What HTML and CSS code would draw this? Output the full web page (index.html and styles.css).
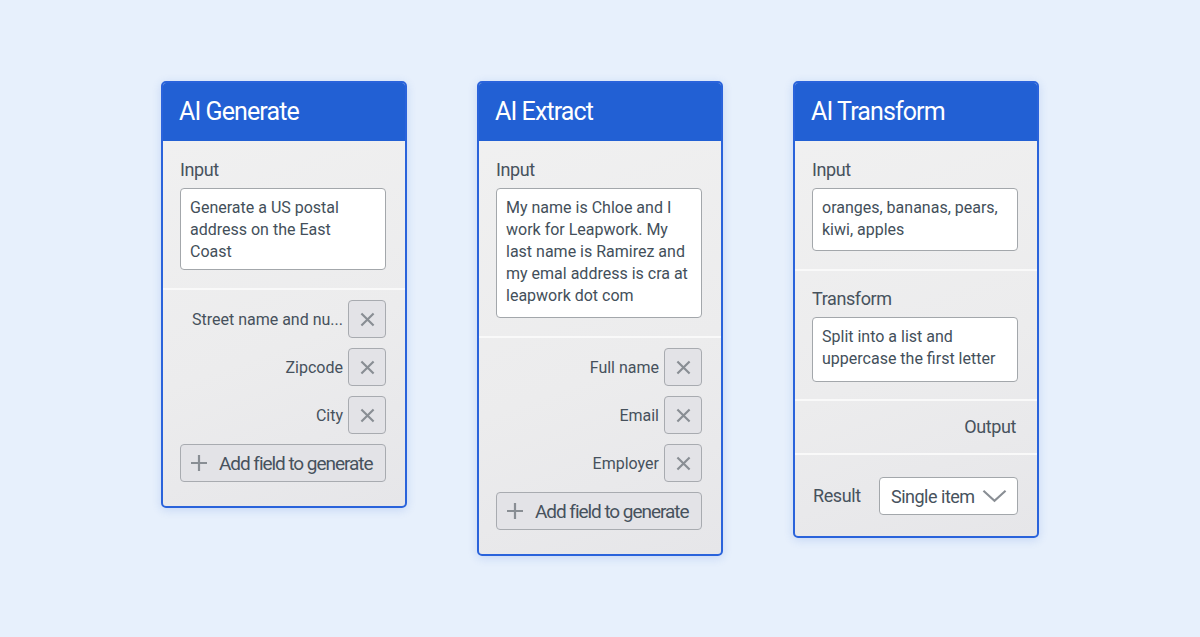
FILE: index.html
```html
<!DOCTYPE html>
<html lang="en">
<head>
<meta charset="utf-8">
<title>AI blocks</title>
<link rel="stylesheet" href="styles.css">
</head>
<body>
<main class="stage">

  <section class="card">
    <header class="card-head">AI Generate</header>
    <div class="sec">
      <div class="label">Input</div>
      <div class="box">Generate a US postal address on the East Coast</div>
    </div>
    <div class="sec sec-fields">
      <div class="field"><span class="field-name">Street name and nu...</span><button class="rm"><svg viewBox="0 0 16 16"><path d="M1.5 1.5L14.5 14.5M14.5 1.5L1.5 14.5"/></svg></button></div>
      <div class="field"><span class="field-name">Zipcode</span><button class="rm"><svg viewBox="0 0 16 16"><path d="M1.5 1.5L14.5 14.5M14.5 1.5L1.5 14.5"/></svg></button></div>
      <div class="field"><span class="field-name">City</span><button class="rm"><svg viewBox="0 0 16 16"><path d="M1.5 1.5L14.5 14.5M14.5 1.5L1.5 14.5"/></svg></button></div>
      <button class="add"><svg viewBox="0 0 18 18"><path d="M9 1V17M1 9H17"/></svg><span>Add field to generate</span></button>
    </div>
  </section>

  <section class="card">
    <header class="card-head">AI Extract</header>
    <div class="sec">
      <div class="label">Input</div>
      <div class="box box-tall">My name is Chloe and I work for Leapwork. My last name is Ramirez and my emal address is cra at leapwork dot com</div>
    </div>
    <div class="sec sec-fields">
      <div class="field"><span class="field-name">Full name</span><button class="rm"><svg viewBox="0 0 16 16"><path d="M1.5 1.5L14.5 14.5M14.5 1.5L1.5 14.5"/></svg></button></div>
      <div class="field"><span class="field-name">Email</span><button class="rm"><svg viewBox="0 0 16 16"><path d="M1.5 1.5L14.5 14.5M14.5 1.5L1.5 14.5"/></svg></button></div>
      <div class="field"><span class="field-name">Employer</span><button class="rm"><svg viewBox="0 0 16 16"><path d="M1.5 1.5L14.5 14.5M14.5 1.5L1.5 14.5"/></svg></button></div>
      <button class="add"><svg viewBox="0 0 18 18"><path d="M9 1V17M1 9H17"/></svg><span>Add field to generate</span></button>
    </div>
  </section>

  <section class="card">
    <header class="card-head">AI Transform</header>
    <div class="sec">
      <div class="label">Input</div>
      <div class="box box-short">oranges, bananas, pears, kiwi, apples</div>
    </div>
    <div class="sec sec-transform">
      <div class="label">Transform</div>
      <div class="box box-med">Split into a list and uppercase the first letter</div>
    </div>
    <div class="sec sec-output">
      <div class="label">Output</div>
    </div>
    <div class="sec sec-result">
      <span class="label">Result</span>
      <div class="select"><span>Single item</span><svg viewBox="0 0 26 14"><path d="M1.5 1.5L13 12L24.5 1.5"/></svg></div>
    </div>
  </section>

</main>
</body>
</html>
```

FILE: styles.css
```css
* { box-sizing: border-box; }

html, body {
  margin: 0;
  height: 100%;
}

body {
  background: #e7f0fc;
  font-family: Roboto, "Liberation Sans", sans-serif;
  color: #46515c;
}

.stage {
  display: flex;
  justify-content: center;
  align-items: flex-start;
  gap: 70px;
  padding-top: 81px;
}

.card {
  width: 246px;
  border: 2px solid #2a63db;
  border-radius: 5px;
  background: linear-gradient(160deg, #f1f1f1 0%, #ececed 60%, #e6e6e9 100%);
  box-shadow: 0 2px 10px rgba(45, 100, 210, 0.18);
  overflow: hidden;
}

.card-head {
  background: #2260d4;
  color: #fff;
  height: 58px;
  padding: 0 0 2px 16px;
  display: flex;
  align-items: center;
  font-size: 25px;
  letter-spacing: -0.9px;
}

.sec {
  padding: 14px 19px 17px 17px;
  border-top: 2px solid #f9f9f9;
}

.card-head + .sec {
  border-top: 0;
  padding-top: 17px;
  padding-bottom: 18px;
}

.label {
  font-size: 18px;
  line-height: 24px;
  letter-spacing: -0.4px;
  color: #47525d;
  margin-bottom: 6px;
}

.box {
  background: #fff;
  border: 1px solid #a3a7ab;
  border-radius: 4px;
  padding: 8px 9px 6px;
  font-size: 16px;
  line-height: 22px;
  color: #434f5a;
}

.box-tall { height: 130px; }
.box-short { height: 63px; }
.box-med { height: 65px; }

.sec-fields {
  padding-top: 10px;
  padding-bottom: 24px;
  display: flex;
  flex-direction: column;
  gap: 10px;
}

.field {
  display: flex;
  justify-content: flex-end;
  align-items: center;
  gap: 5px;
}

.field-name {
  font-size: 16px;
  color: #46515c;
}

.rm, .add {
  background: #e3e3e7;
  border: 1px solid #a8abb0;
  border-radius: 4px;
  font-family: inherit;
  padding: 0;
  margin: 0;
}

.rm {
  width: 38px;
  height: 38px;
  display: flex;
  align-items: center;
  justify-content: center;
}

.rm svg {
  width: 15px;
  height: 15px;
  fill: none;
  stroke: #898e94;
  stroke-width: 2.3;
}

.add {
  height: 38px;
  width: 100%;
  display: flex;
  align-items: center;
  padding-left: 9px;
  gap: 11px;
  color: #47525d;
  font-size: 19px;
  letter-spacing: -1.05px;
}

.add svg {
  width: 18px;
  height: 18px;
  fill: none;
  stroke: #898e94;
  stroke-width: 2.2;
}

.sec-transform {
  padding-top: 16px;
}

.sec-output {
  padding-top: 14px;
  padding-bottom: 14px;
}

.sec-output .label {
  text-align: right;
  margin: 0;
  padding-right: 2px;
}

.sec-result {
  display: flex;
  align-items: center;
  padding-top: 22px;
  padding-bottom: 21px;
}

.sec-result .label {
  margin: 0 0 0 1px;
  width: 66px;
}

.select {
  flex: 1;
  height: 38px;
  background: #fff;
  border: 1px solid #a3a7ab;
  border-radius: 4px;
  display: flex;
  align-items: center;
  justify-content: space-between;
  padding: 0 10px 0 11px;
  font-size: 18px;
  letter-spacing: -0.5px;
  color: #47525d;
}

.select svg {
  width: 25px;
  height: 14px;
  fill: none;
  stroke: #898e94;
  stroke-width: 2.2;
}
```
